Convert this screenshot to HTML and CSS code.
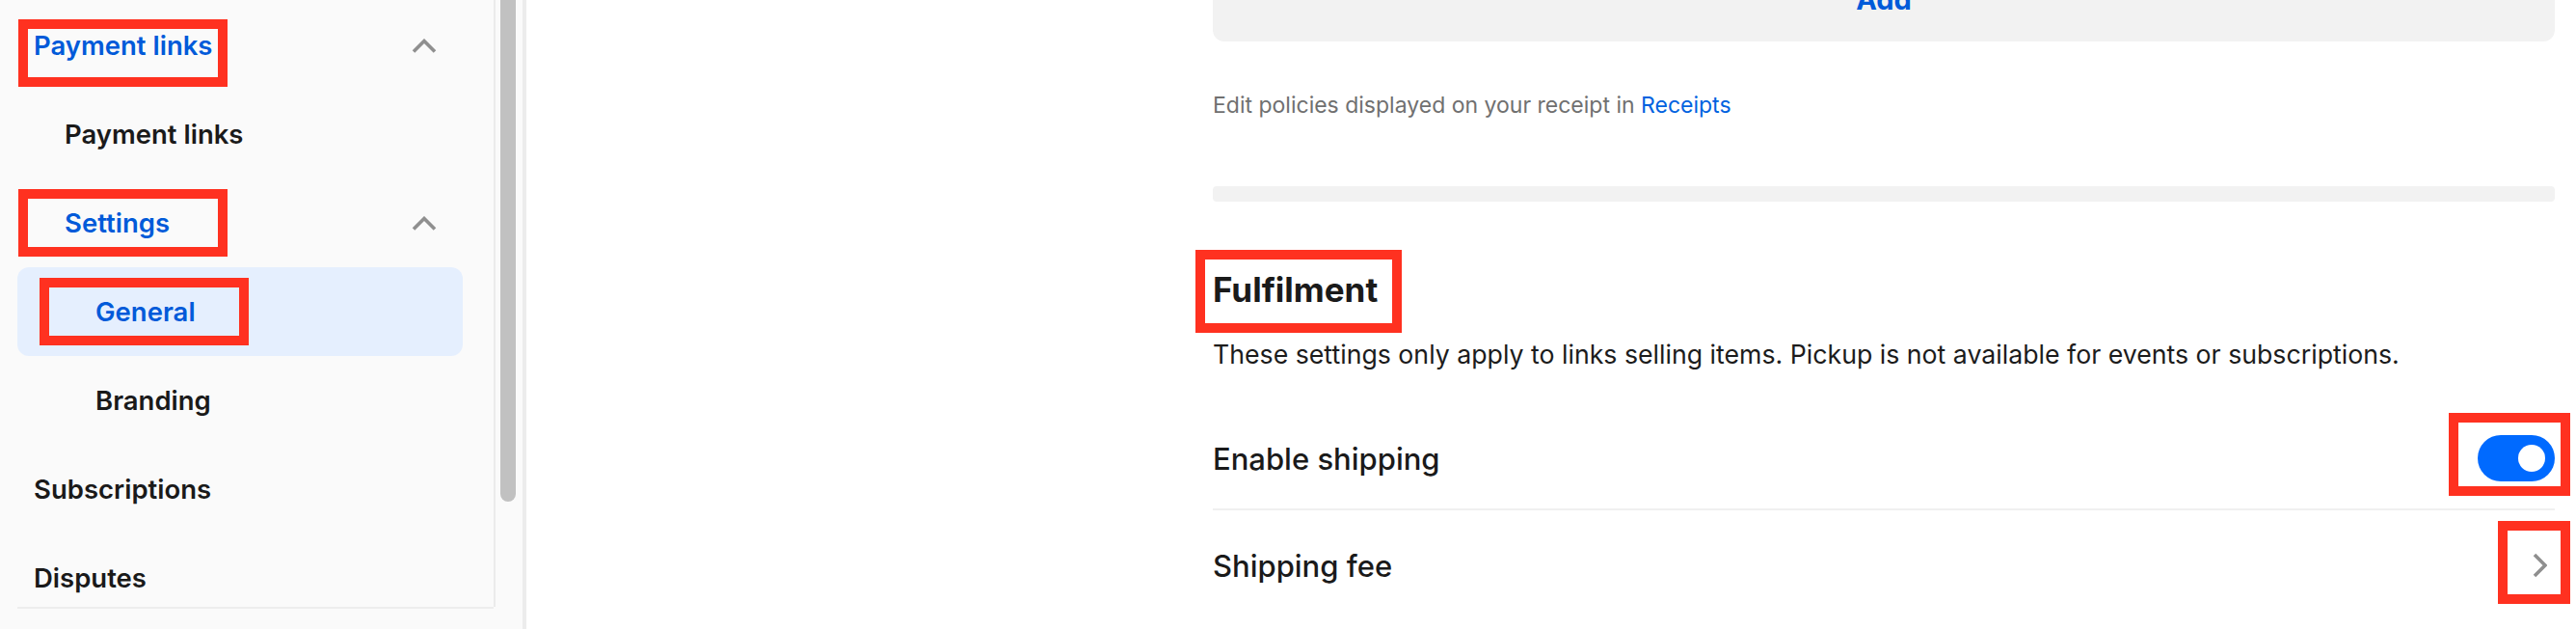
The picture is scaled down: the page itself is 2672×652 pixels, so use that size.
FILE: index.html
```html
<!DOCTYPE html>
<html lang="en">
<head>
<meta charset="utf-8">
<title>Payment links settings</title>
<link rel="stylesheet" href="styles.css">
</head>
<body>
<div class="app">
  <aside class="sidebar">
    <div class="sb-scroll">
      <nav class="nav">
        <div class="nav-row lvl1 active-group">
          <span>Payment links</span>
          <svg class="chev-up" width="26" height="15" viewBox="0 0 26 15"><polyline points="2,13.5 13,2.5 24,13.5"/></svg>
        </div>
        <div class="nav-row lvl2"><span>Payment links</span></div>
        <div class="nav-row lvl2 active-group">
          <span>Settings</span>
          <svg class="chev-up" width="26" height="15" viewBox="0 0 26 15"><polyline points="2,13.5 13,2.5 24,13.5"/></svg>
        </div>
        <div class="nav-row lvl3 selected"><span>General</span></div>
        <div class="nav-row lvl3"><span>Branding</span></div>
        <div class="nav-row lvl1"><span>Subscriptions</span></div>
        <div class="nav-row lvl1"><span>Disputes</span></div>
      </nav>
      <div class="track"><div class="thumb"></div></div>
    </div>
    <div class="sb-foot"></div>
  </aside>

  <main class="main">
    <div class="content">
      <div class="add-box"><span class="add-label">Add</span></div>
      <p class="policy-note">Edit policies displayed on your receipt in <a class="link">Receipts</a></p>
      <div class="section-bar"></div>
      <h2 class="section-title">Fulfilment</h2>
      <p class="section-desc">These settings only apply to links selling items. Pickup is not available for events or subscriptions.</p>
      <div class="setting-row row-toggle">
        <span class="setting-label">Enable shipping</span>
        <span class="toggle"><span class="knob"></span></span>
      </div>
      <div class="setting-row row-link">
        <span class="setting-label">Shipping fee</span>
        <svg class="chev-right" width="15" height="26" viewBox="0 0 15 26"><polyline points="2,2 13,13 2,24"/></svg>
      </div>
    </div>
  </main>
</div>

<div class="annotations">
  <div class="mark m1"></div>
  <div class="mark m2"></div>
  <div class="mark m3"></div>
  <div class="mark m4"></div>
  <div class="mark m5"></div>
  <div class="mark m6"></div>
</div>
</body>
</html>
```

FILE: styles.css
```css
* { box-sizing: border-box; }
html, body { margin: 0; padding: 0; }
body {
  width: 2672px;
  height: 652px;
  overflow: hidden;
  background: #ffffff;
  font-family: Inter, "Noto Sans", sans-serif;
  color: #1a1a1a;
  position: relative;
}
.app { display: flex; height: 652px; }

/* Sidebar */
.sidebar {
  width: 546px;
  flex: none;
  display: flex;
  flex-direction: column;
  background: #fafafa;
  border-right: 4px solid #ececec;
}
.sb-scroll { height: 629px; display: flex; flex: none; }
.nav {
  width: 514px;
  padding: 1px 32px 0 18px;
  border-right: 2px solid #ebebeb;
  overflow: hidden;
}
.nav-row {
  height: 92px;
  display: flex;
  align-items: center;
  justify-content: space-between;
  padding-right: 27px;
  font-size: 27.5px;
  font-weight: 600;
  color: #1a1a1a;
  border-radius: 12px;
}
.lvl1 { padding-left: 17px; }
.lvl2 { padding-left: 49px; }
.lvl3 { padding-left: 81px; }
.active-group, .selected { color: #005ad9; }
.selected { background: #e5effe; }
.chev-up polyline, .chev-right polyline {
  fill: none;
  stroke: #8f8f8f;
  stroke-width: 3.6;
}
.track { width: 26px; padding: 0 5px; }
.thumb {
  height: 520px;
  background: #c1c1c1;
  border-radius: 0 0 8px 8px;
}
.sb-foot {
  flex: 1;
  margin: 0 30px 0 18px;
  border-top: 2px solid #ededed;
}

/* Main */
.main {
  flex: 1;
  padding: 0 22px 0 712px;
  overflow: hidden;
}
.content { display: flex; flex-direction: column; }
.add-box {
  height: 88px;
  margin-top: -45px;
  background: #f2f2f2;
  border-radius: 12px;
  display: flex;
  align-items: center;
  justify-content: center;
}
.add-label { font-size: 29px; font-weight: 700; color: #005ad9; }
.policy-note {
  margin: 50px 0 0;
  font-size: 23px;
  line-height: 32px;
  color: #707070;
}
.link { color: #0062e0; }
.section-bar {
  height: 16px;
  margin-top: 68px;
  background: #f2f2f2;
  border-radius: 4px;
}
.section-title {
  margin: 70px 0 0;
  font-size: 35px;
  line-height: 42px;
  font-weight: 700;
  color: #1a1a1a;
}
.section-desc {
  margin: 29px 0 0;
  font-size: 26.7px;
  line-height: 34px;
  color: #1c1c1c;
}
.setting-row {
  display: flex;
  align-items: center;
  justify-content: space-between;
}
.row-toggle { height: 106px; margin-top: 39px; border-bottom: 2px solid #f0f0f0; }
.row-link { height: 114px; padding-right: 8px; }
.setting-label { font-size: 31px; font-weight: 500; color: #1a1a1a; }
.toggle {
  width: 80px;
  height: 48px;
  border-radius: 24px;
  background: #006aff;
  display: flex;
  align-items: center;
  justify-content: flex-end;
  padding-right: 10px;
}
.knob { width: 28px; height: 28px; border-radius: 50%; background: #ffffff; }

/* Red annotation boxes drawn over the screenshot */
.annotations { position: absolute; inset: 0; pointer-events: none; }
.mark { position: absolute; border: 10px solid #ff3120; }
.m1 { left: 19px; top: 20px; width: 217px; height: 70px; }
.m2 { left: 19px; top: 196px; width: 217px; height: 70px; }
.m3 { left: 41px; top: 288px; width: 217px; height: 70px; }
.m4 { left: 1240px; top: 259px; width: 214px; height: 86px; }
.m5 { left: 2540px; top: 428px; width: 126px; height: 86px; }
.m6 { left: 2591px; top: 540px; width: 75px; height: 86px; }
```
